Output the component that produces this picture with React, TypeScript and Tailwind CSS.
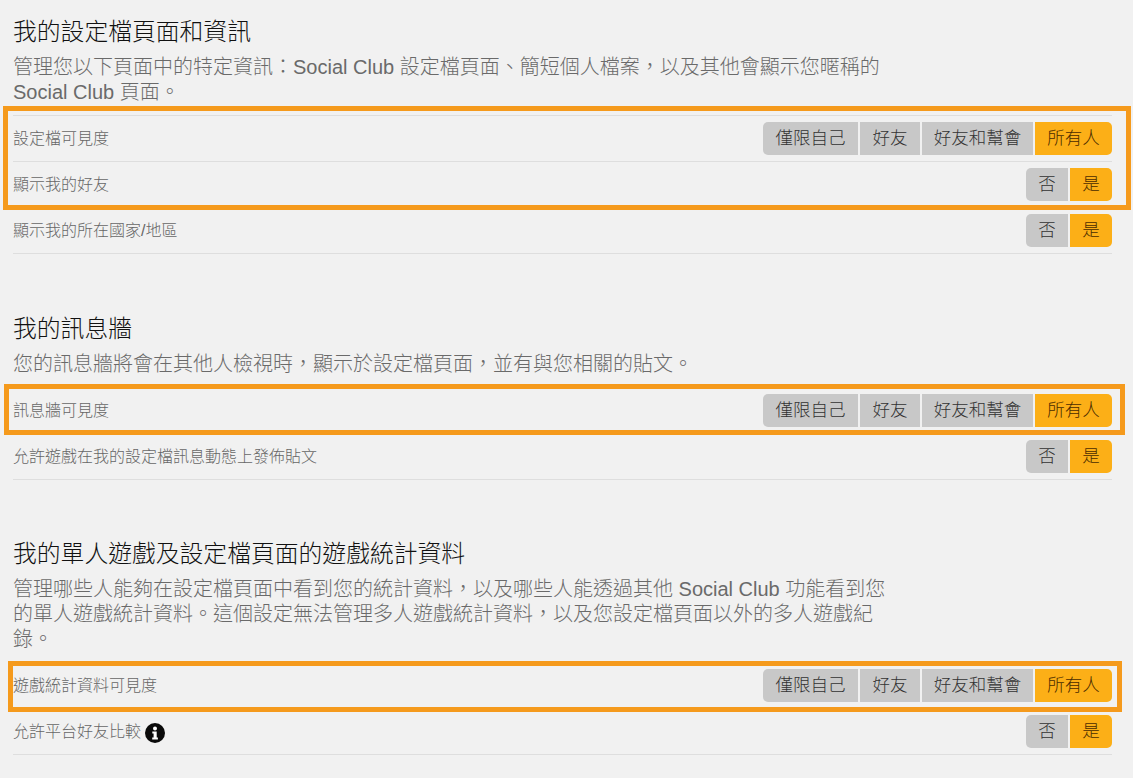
const fontStack = '"Liberation Sans", "Noto Sans CJK TC", sans-serif';

const Segmented = ({ options }: { options: { label: string; width: string }[] }) => (
  <div className="flex h-[33px] gap-[2px] overflow-hidden rounded-[5px]">
    {options.map((o, i) => (
      <div
        key={o.label}
        className={`flex h-full items-center justify-center text-[17.5px] font-light ${o.width} ${
          i === options.length - 1 ? "bg-[#fcaf17] text-[#4a2c00]" : "bg-[#c8c8c8] text-[#333333]"
        }`}
      >
        {o.label}
      </div>
    ))}
  </div>
);

const visibility = [
  { label: "僅限自己", width: "w-[95px]" },
  { label: "好友", width: "w-[60px]" },
  { label: "好友和幫會", width: "w-[111px]" },
  { label: "所有人", width: "w-[77px]" },
];

const yesNo = [
  { label: "否", width: "w-[42px]" },
  { label: "是", width: "w-[42px]" },
];

const Row = ({ label, options, info }: { label: string; options: typeof yesNo; info?: boolean }) => (
  <div className="flex h-[46px] items-center justify-between border-b border-[#dedede]">
    <div className="flex items-center gap-[4px] text-[16px] font-light text-[#666666]">
      {label}
      {info && (
        <svg viewBox="0 0 20 20" className="h-[20px] w-[20px] mt-[2px]">
          <circle cx="10" cy="10" r="10" fill="#0a0a0a" />
          <circle cx="10" cy="5.5" r="2" fill="#ffffff" />
          <path d="M7.3 8.5h4.4v6h1.2v2H7.2v-2h1.4v-4H7.3z" fill="#ffffff" />
        </svg>
      )}
    </div>
    <Segmented options={options} />
  </div>
);

const Section = ({ title, lines, className, children }: { title: string; lines: string[]; className: string; children: React.ReactNode }) => (
  <section className={className}>
    <h2 className="text-[23.8px] leading-[30px] font-light text-[#111111]">{title}</h2>
    <div className="mt-[8px] text-[20px] leading-[25px] font-light text-[#6a6a6a]">
      {lines.map((l) => (
        <div key={l} className="whitespace-nowrap">{l}</div>
      ))}
    </div>
    {children}
  </section>
);

export default function App() {
  return (
    <div className="relative h-[778px] w-[1133px] overflow-hidden bg-[#f1f1f1] pl-[13px] pr-[21px]" style={{ fontFamily: fontStack }}>
      <Section
        className="pt-[17px]"
        title="我的設定檔頁面和資訊"
        lines={["管理您以下頁面中的特定資訊：Social Club 設定檔頁面、簡短個人檔案，以及其他會顯示您暱稱的", "Social Club 頁面。"]}
      >
        <div className="mt-[10px] border-t border-[#dedede]">
          <Row label="設定檔可見度" options={visibility} />
          <Row label="顯示我的好友" options={yesNo} />
          <Row label="顯示我的所在國家/地區" options={yesNo} />
        </div>
      </Section>
      <Section
        className="pt-[60px]"
        title="我的訊息牆"
        lines={["您的訊息牆將會在其他人檢視時，顯示於設定檔頁面，並有與您相關的貼文。"]}
      >
        <div className="mt-[11px]">
          <Row label="訊息牆可見度" options={visibility} />
          <Row label="允許遊戲在我的設定檔訊息動態上發佈貼文" options={yesNo} />
        </div>
      </Section>
      <Section
        className="pt-[59px]"
        title="我的單人遊戲及設定檔頁面的遊戲統計資料"
        lines={[
          "管理哪些人能夠在設定檔頁面中看到您的統計資料，以及哪些人能透過其他 Social Club 功能看到您",
          "的單人遊戲統計資料。這個設定無法管理多人遊戲統計資料，以及您設定檔頁面以外的多人遊戲紀",
          "錄。",
        ]}
      >
        <div className="mt-[11px]">
          <Row label="遊戲統計資料可見度" options={visibility} />
          <Row label="允許平台好友比較" options={yesNo} info />
        </div>
      </Section>
      {/* annotation boxes over the page */}
      <div className="absolute left-[3px] top-[106px] h-[104px] w-[1128px] border-[5px] border-[#f59a1c]" />
      <div className="absolute left-[4px] top-[384px] h-[51px] w-[1121px] border-[5px] border-[#f59a1c]" />
      <div className="absolute left-[8px] top-[661px] h-[51px] w-[1114px] border-[5px] border-[#f59a1c]" />
    </div>
  );
}
